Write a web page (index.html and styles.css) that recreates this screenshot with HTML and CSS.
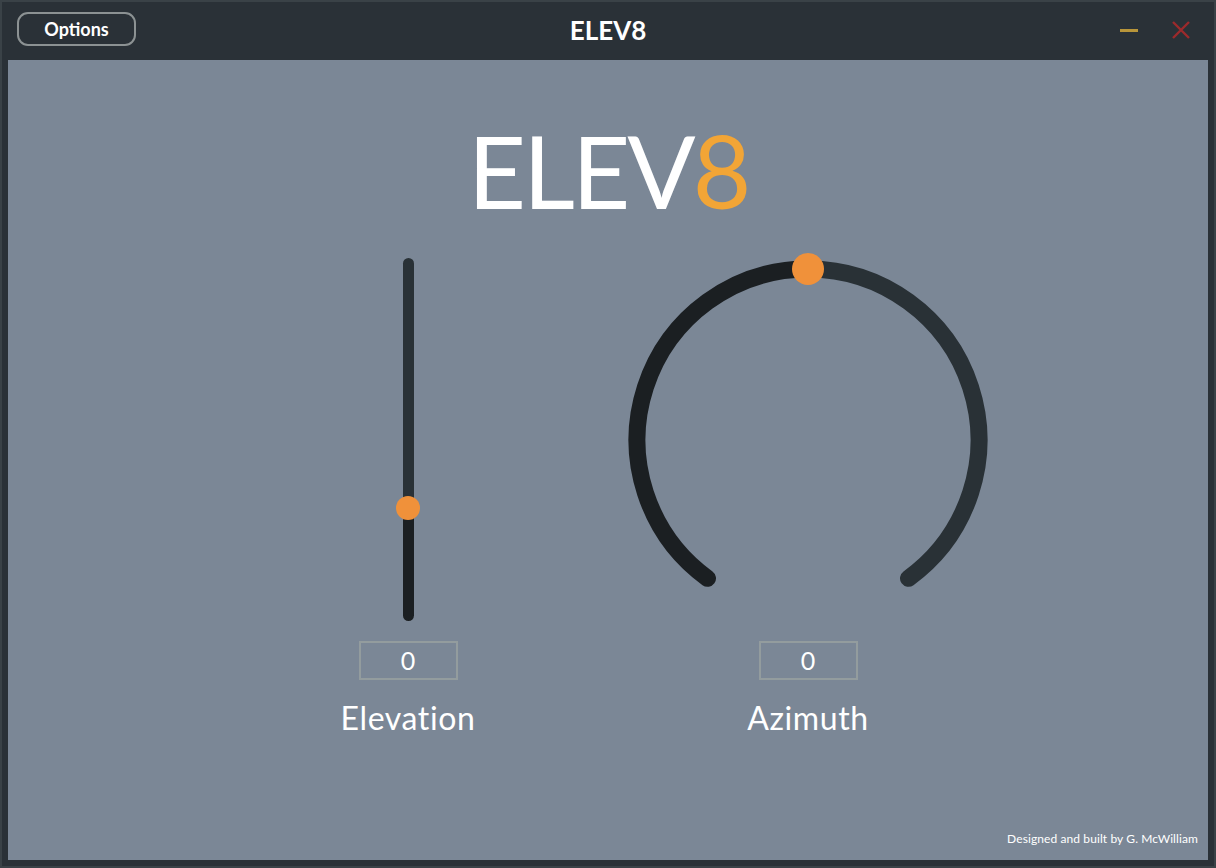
FILE: index.html
```html
<!DOCTYPE html>
<html>
<head>
    <title>ELEV8</title>
    <link rel="stylesheet" href="styles.css">
</head>
<body>
    <div id="window">
        <header id="titlebar">
            <button id="options">Options</button>
            <h1 id="title">ELEV8</h1>
            <div id="window-controls">
                <span class="win-btn" id="minimise">
                    <svg width="18" height="18" viewBox="0 0 18 18"><path d="M0 9.5 H18" stroke="#b8953a" stroke-width="3"/></svg>
                </span>
                <span class="win-btn" id="close">
                    <svg width="18" height="18" viewBox="0 0 18 18"><path d="M1 1 L17 17 M17 1 L1 17" stroke="#9c2a2c" stroke-width="2.4"/></svg>
                </span>
            </div>
        </header>

        <main id="panel">
            <p id="logo">ELEV<span class="accent">8</span></p>

            <div id="controls">
                <div class="control">
                    <div class="control-area">
                        <div id="slider">
                            <span class="thumb" style="top: 250px"></span>
                        </div>
                    </div>
                    <div class="value">0</div>
                    <p class="label">Elevation</p>
                </div>

                <div class="control">
                    <div class="control-area">
                        <!-- 288 degree dial, gap at the bottom -->
                        <svg id="dial" width="380" height="380" viewBox="0 0 380 380">
                            <path d="M89.5 328.3 A171 171 0 0 1 190 19" class="arc-done"/>
                            <path d="M190 19 A171 171 0 0 1 290.5 328.3" class="arc-rest"/>
                            <circle cx="190" cy="19" r="16" fill="#f0913a"/>
                        </svg>
                    </div>
                    <div class="value">0</div>
                    <p class="label">Azimuth</p>
                </div>
            </div>

            <p id="credit">Designed and built by G. McWilliam</p>
        </main>
    </div>
</body>
</html>
```

FILE: styles.css
```css
:root {
    --frame: #2a3137;
    --panel: #7b8796;
    --track: #293136;
    --track-done: #1b1f22;
    --thumb: #f0913a;
    --accent: #f2a536;
}

* {
    box-sizing: border-box;
    font-family: Lato, "Noto Sans", sans-serif;
}

body {
    margin: 0;
    background-color: var(--frame);
}

#window {
    width: 1216px;
    height: 868px;
    border: 2px solid #3a4247;
    background-color: var(--frame);
    display: flex;
    flex-direction: column;
}

#titlebar {
    height: 58px;
    display: flex;
    align-items: center;
    justify-content: space-between;
    padding: 0 24px 2px 15px;
    position: relative;
}

#options {
    width: 119px;
    height: 34px;
    margin-bottom: 2px;
    background: none;
    border: 2px solid #8c9293;
    border-radius: 11px;
    color: white;
    font-size: 18px;
    font-weight: bold;
    padding: 0;
}

#title {
    position: absolute;
    left: 0;
    right: 0;
    margin: 0;
    text-align: center;
    color: white;
    font-size: 26px;
    font-weight: bold;
    pointer-events: none;
}

#window-controls {
    display: flex;
    gap: 34px;
    align-items: center;
}

.win-btn {
    display: block;
    width: 18px;
    height: 18px;
}

.win-btn svg {
    display: block;
}

#panel {
    flex: 1;
    margin: 0 6px 6px;
    background-color: var(--panel);
    display: flex;
    flex-direction: column;
    align-items: center;
}

#logo {
    margin: 60px 0 0;
    height: 130px;
    line-height: 1;
    font-size: 101px;
    font-weight: 400;
    letter-spacing: -3px;
    color: white;
}

.accent {
    color: var(--accent);
}

#controls {
    display: grid;
    grid-template-columns: 400px 400px;
    justify-content: center;
}

.control {
    display: flex;
    flex-direction: column;
    align-items: center;
}

.control-area {
    height: 380px;
    display: flex;
    justify-content: center;
}

#slider {
    position: relative;
    width: 11px;
    height: 363px;
    margin-top: 8px;
    border-radius: 6px;
    background: linear-gradient(to bottom, var(--track) 250px, var(--track-done) 250px);
}

.thumb {
    position: absolute;
    left: 50%;
    width: 24px;
    height: 24px;
    margin: -12px 0 0 -12px;
    border-radius: 50%;
    background-color: var(--thumb);
}

#dial path {
    fill: none;
    stroke-width: 17;
    stroke-linecap: round;
}

#dial .arc-done {
    stroke: var(--track-done);
}

#dial .arc-rest {
    stroke: var(--track);
}

.value {
    width: 99px;
    height: 39px;
    margin-top: 11px;
    border: 2px solid #939c9e;
    color: white;
    font-size: 25px;
    line-height: 35px;
    text-align: center;
}

.label {
    margin: 22px 0 0;
    color: white;
    font-size: 32px;
    letter-spacing: 0.6px;
    line-height: 1;
}

#credit {
    margin: auto 10px 14px auto;
    color: white;
    font-size: 12px;
    letter-spacing: 0.1px;
}
```
